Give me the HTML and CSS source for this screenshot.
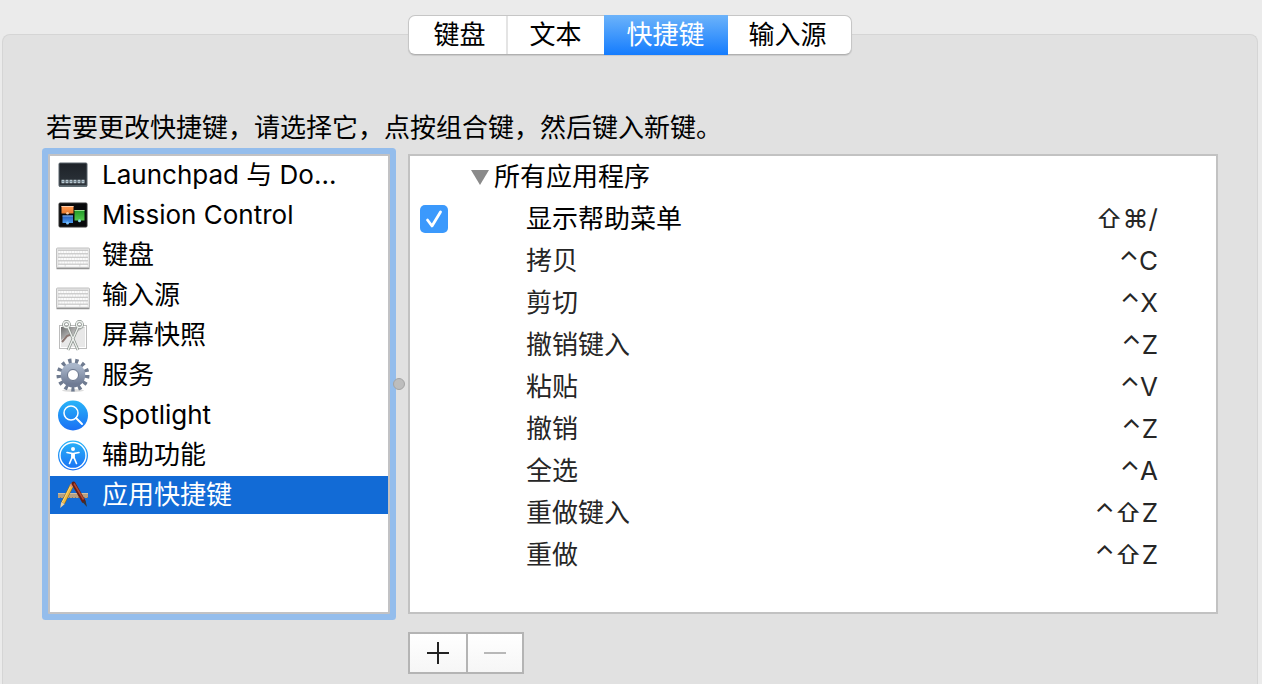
FILE: index.html
```html
<!DOCTYPE html>
<html lang="zh-CN">
<head>
<meta charset="utf-8">
<title>键盘</title>
<link rel="stylesheet" href="styles.css">
</head>
<body>
<svg class="defs" aria-hidden="true">
  <defs>
    <linearGradient id="dark" x1="0" y1="0" x2="0" y2="1"><stop offset="0" stop-color="#1d2228"/><stop offset="1" stop-color="#2d343b"/></linearGradient>
    <linearGradient id="orange" x1="0" y1="0" x2="0" y2="1"><stop offset="0" stop-color="#ff9a55"/><stop offset="1" stop-color="#e87a2c"/></linearGradient>
    <linearGradient id="blue" x1="0" y1="0" x2="0" y2="1"><stop offset="0" stop-color="#2458b8"/><stop offset="1" stop-color="#4c9cf0"/></linearGradient>
    <linearGradient id="green" x1="0" y1="0" x2="0" y2="1"><stop offset="0" stop-color="#1f9a28"/><stop offset="1" stop-color="#55c84c"/></linearGradient>
    <linearGradient id="sky" x1="0" y1="0" x2="0" y2="1"><stop offset="0" stop-color="#28b4f8"/><stop offset="1" stop-color="#1a6ff4"/></linearGradient>
    <linearGradient id="steel" x1="0" y1="0" x2="0" y2="1"><stop offset="0" stop-color="#a9b6ca"/><stop offset="1" stop-color="#6f7b94"/></linearGradient>
    <linearGradient id="photo" x1="0" y1="0" x2="1" y2="1"><stop offset="0" stop-color="#6d6d6d"/><stop offset=".5" stop-color="#c8c8c8"/><stop offset="1" stop-color="#ececec"/></linearGradient>
    <g id="keyboard">
      <rect x="0.5" y="8" width="33" height="20" rx="1" fill="#e6e6e6" stroke="#c0c0c0"/>
      <path d="M0.500 28.500h33" stroke="#949494" stroke-width="1.500"/>
      <g stroke="#fcfcfc" stroke-width="2.600" stroke-dasharray="2 .7">
        <path d="M2.500 12h29"/><path d="M3.500 15.500h28"/><path d="M2.500 19h29"/><path d="M3.500 22.500h28"/><path d="M2.500 25.500h6M10 25.500h13M24.500 25.500h7" stroke-dasharray="none" stroke-width="1.800"/>
      </g>
      <path d="M2 10.300h30M2 13.800h30M2 17.300h30M2 20.800h30M2 24.200h30" stroke="#b8b8b8" stroke-width=".8"/>
    </g>
  </defs>
</svg>
<main class="window">
  <nav class="tabs">
    <button class="tab">键盘</button>
    <button class="tab">文本</button>
    <button class="tab tab-active" aria-current="page">快捷键</button>
    <button class="tab">输入源</button>
  </nav>
  <section class="panel">
    <p class="hint">若要更改快捷键，请选择它，点按组合键，然后键入新键。</p>
    <div class="split">
      <ul class="sidebar">
        <li><button class="item">
          <svg class="icon" viewBox="0 0 34 38"><rect x="3" y="7" width="28" height="23.500" rx="1" fill="url(#dark)" stroke="#59636a"/><path d="M3.500 30h27" stroke="#66737a" stroke-width="1.500"/><path d="M5.500 25.500h23" stroke="#b9c8d0" stroke-width="3.600" stroke-dasharray="3 1"/><path d="M6.500 25.500h21" stroke="#506b7c" stroke-width="1.200" stroke-dasharray="1 3"/></svg>
          Launchpad 与 Do...</button></li>
        <li><button class="item">
          <svg class="icon" viewBox="0 0 34 38"><rect x="3" y="7" width="28" height="24" rx="1" fill="#08090b" stroke="#333"/><rect x="5.500" y="10" width="12" height="7.500" fill="url(#orange)"/><path d="M5.500 10.500h12" stroke="#ffd0ae"/><rect x="6.500" y="19.500" width="10.500" height="7.500" fill="url(#blue)"/><path d="M6.500 20h10.500" stroke="#83b6ef"/><rect x="18.500" y="14" width="10" height="10.500" fill="url(#green)"/><path d="M18.500 14.500h10" stroke="#9ae08e"/><circle cx="11.500" cy="17.300" r="1.300" fill="#f7c69d"/><circle cx="11.500" cy="27" r="1.500" fill="#79bdf7"/><circle cx="23.500" cy="24.800" r="1.500" fill="#8bd8e0"/></svg>
          Mission Control</button></li>
        <li><button class="item"><svg class="icon" viewBox="0 0 34 38"><use href="#keyboard" y="4"/></svg>键盘</button></li>
        <li><button class="item"><svg class="icon" viewBox="0 0 34 38"><use href="#keyboard" y="4"/></svg>输入源</button></li>
        <li><button class="item">
          <svg class="icon" viewBox="0 0 34 38"><rect x="3.500" y="9.500" width="27" height="23" fill="#fff" stroke="#bcbcbc"/><rect x="5" y="11" width="24" height="20" fill="url(#photo)"/><path d="M5 31V24l7-5 6-1 11-7v20z" fill="#e8e8e8"/><path d="M6 26l5-6 5-2" fill="none" stroke="#8a7671" stroke-width="2"/><g fill="none" stroke="#89918c" stroke-width="2.800"><circle cx="10.500" cy="8.500" r="3"/><circle cx="23.500" cy="8.500" r="3"/><path d="M12 11.500L22 34M22 11.500L12 34"/></g><g fill="none" stroke="#eef1ee" stroke-width="1.300"><circle cx="10.500" cy="8.500" r="3"/><circle cx="23.500" cy="8.500" r="3"/><path d="M12 11.500L22 34M22 11.500L12 34"/></g></svg>
          屏幕快照</button></li>
        <li><button class="item">
          <svg class="icon" viewBox="0 0 34 38"><ellipse cx="17" cy="34.500" rx="11" ry="1.500" fill="#ddd"/><circle cx="17" cy="19" r="14" fill="none" stroke="#6f7b90" stroke-width="5" stroke-dasharray="3.200 3.567"/><circle cx="17" cy="19" r="8.800" fill="none" stroke="url(#steel)" stroke-width="7"/><circle cx="17" cy="19" r="5.500" fill="#fff" stroke="#66728a"/></svg>
          服务</button></li>
        <li><button class="item">
          <svg class="icon" viewBox="0 0 34 38"><circle cx="17" cy="19.500" r="15" fill="url(#sky)"/><circle cx="15" cy="17" r="7" fill="none" stroke="#fff" stroke-width="1.500"/><path d="M20 22l6 6" stroke="#fff" stroke-width="2" stroke-linecap="round"/></svg>
          Spotlight</button></li>
        <li><button class="item">
          <svg class="icon" viewBox="0 0 34 38"><circle cx="17" cy="19.500" r="15" fill="url(#sky)"/><circle cx="17" cy="19.500" r="13" fill="none" stroke="#fff" stroke-width="1.400"/><circle cx="17" cy="13" r="2" fill="#fff"/><path d="M11 16.500l5 1v4L13.500 27.500M23 16.500l-5 1v4L20.500 27.500" fill="none" stroke="#fff" stroke-width="1.600" stroke-linecap="round"/><path d="M15.300 17h3.400v5.500h-3.400z" fill="#fff"/></svg>
          辅助功能</button></li>
        <li><button class="item item-selected" aria-current="true">
          <svg class="icon" viewBox="0 0 34 38"><path d="M2 17h30v5H2z" fill="#b5a082"/><path d="M2 17.500h30" stroke="#d2bea0"/><path d="M4 21.500h28" stroke="#8d7a60" stroke-dasharray="1 2"/><path d="M16 9L7 27" stroke="#8c6b22" stroke-width="4"/><path d="M16 9L7 27" stroke="#f0ba40" stroke-width="2.800"/><path d="M15.300 8.500L6.300 26" stroke="#ffe08b" stroke-width=".8"/><path d="M5.200 26l3.500 2-4.500 4z" fill="#ecd2a4"/><path d="M15.500 7l3 1.500-2 3-3-1.500z" fill="#d49278"/><path d="M17.500 7.500L27.500 25" stroke="#681d12" stroke-width="4" stroke-linecap="round"/><path d="M18 7.500l9.500 16" stroke="#b64930" stroke-width="1.500"/><path d="M26.500 26l3-1.500 1.500 6.500z" fill="#353437"/></svg>
          应用快捷键</button></li>
      </ul>
      <div class="divider"><span class="grip"></span></div>
      <div class="shortcuts">
        <table class="table">
          <tbody>
            <tr><td class="check"></td><th class="group" scope="rowgroup" colspan="2"><button class="disclose" aria-expanded="true"><svg class="triangle" viewBox="0 0 18 15" aria-hidden="true"><path d="M0 0h18L9 15z"/></svg>所有应用程序</button></th></tr>
            <tr class="enabled"><td class="check"><input class="box" type="checkbox" id="help" checked></td><td class="name"><label for="help">显示帮助菜单</label></td><td class="keys">⇧⌘/</td></tr>
            <tr><td class="check"></td><td class="name">拷贝</td><td class="keys">⌃C</td></tr>
            <tr><td class="check"></td><td class="name">剪切</td><td class="keys">⌃X</td></tr>
            <tr><td class="check"></td><td class="name">撤销键入</td><td class="keys">⌃Z</td></tr>
            <tr><td class="check"></td><td class="name">粘贴</td><td class="keys">⌃V</td></tr>
            <tr><td class="check"></td><td class="name">撤销</td><td class="keys">⌃Z</td></tr>
            <tr><td class="check"></td><td class="name">全选</td><td class="keys">⌃A</td></tr>
            <tr><td class="check"></td><td class="name">重做键入</td><td class="keys">⌃⇧Z</td></tr>
            <tr><td class="check"></td><td class="name">重做</td><td class="keys">⌃⇧Z</td></tr>
          </tbody>
        </table>
      </div>
    </div>
    <div class="actions">
      <button class="action" aria-label="添加"><svg class="sign" viewBox="0 0 22 22"><path d="M0 11h22M11 0v22"/></svg></button>
      <button class="action" aria-label="移除" disabled><svg class="sign" viewBox="0 0 22 22"><path d="M0 11h22"/></svg></button>
    </div>
  </section>
</main>
</body>
</html>
```
FILE: styles.css
```css
* { box-sizing: border-box; }

body {
  margin: 0;
  background: #ebebeb;
  color: #000;
  font: 26px/38px Inter, "Noto Sans CJK SC", sans-serif;
}

button {
  margin: 0;
  padding: 0;
  border: 0;
  background: none;
  color: inherit;
  font: inherit;
}

.defs { position: absolute; width: 0; height: 0; }

.window {
  display: flex;
  flex-direction: column;
  min-height: 100vh;
  padding: 15px 4px 0 2px;
}

.tabs {
  z-index: 1;
  display: flex;
  align-self: center;
  margin-bottom: -21px;
  border: 1px solid #c6c6c6;
  border-bottom-color: #b0b0b0;
  border-radius: 7px;
  background: #fff;
  box-shadow: 0 1px 1px #0000001c;
}

.tab { padding: 0 22px 0 21px; line-height: 38px; }
.tab:first-child { padding: 0 21px 0 24px; border-right: 2px solid #e4e4e4; }
.tab:last-child { padding-right: 24px; }
.tab-active {
  margin: -1px 0;
  padding: 1px 23px;
  background: linear-gradient(#6cb3fa, #147cfe);
  color: #fff;
}

.panel {
  flex: 1;
  padding: 74px 39px 10px 45px;
  border: 1px solid #d5d5d5;
  border-bottom: 0;
  border-radius: 8px 8px 0 0;
  background: #e1e1e1;
}

.hint { margin: 0 0 7px -2px; }

.split { display: flex; min-height: 460px; }

.sidebar {
  flex: 0 0 342px;
  display: flex;
  flex-direction: column;
  gap: 2px;
  margin: 0;
  padding: 0;
  border: 2px solid #c2c2c4;
  background: #fff;
  box-shadow: 0 0 0 6px #94bdec;
  border-radius: 1px;
  list-style: none;
}

.item {
  display: flex;
  align-items: center;
  gap: 12px;
  width: 100%;
  height: 38px;
  padding-left: 6px;
  text-align: left;
  white-space: nowrap;
}
.item-selected { background: #126bd6; color: #fff; }
.icon { flex: none; width: 34px; height: 38px; }

.divider {
  z-index: 1;
  flex: 0 0 18px;
  display: grid;
  place-items: center;
}
.grip {
  width: 12px;
  height: 12px;
  border: 1px solid #a4a4a4;
  border-radius: 50%;
  background: #bdbdbd;
}

.shortcuts { flex: 1; border: 2px solid #c2c2c2; background: #fff; }
.table { width: 100%; border-collapse: collapse; color: #262626; }
.table tr { height: 42px; }
.table td, .table th { padding: 0; font-weight: 400; text-align: left; }
.table .check { width: 61px; padding-left: 10px; }
.table .name { padding-left: 55px; }
.table .keys { padding-right: 58px; text-align: right; font-family: Inter, "DejaVu Sans", sans-serif; }
.enabled .name, .group { color: #000; }

.disclose { display: flex; align-items: center; gap: 5px; }
.triangle { width: 18px; height: 15px; fill: #8a8a8a; }

.box {
  display: block;
  width: 28px;
  height: 28px;
  margin: 0;
  appearance: none;
  border-radius: 5px;
}
.box:checked {
  background: #3b99fc url("data:image/svg+xml,%3Csvg xmlns='http://www.w3.org/2000/svg' viewBox='0 0 28 28'%3E%3Cpath d='M7.500 15l4.500 6 8.500-14' fill='none' stroke='white' stroke-width='2.800' stroke-linecap='round' stroke-linejoin='round'/%3E%3C/svg%3E");
}

.actions { display: flex; margin: 18px 0 0 360px; }
.action {
  display: grid;
  place-items: center;
  width: 60px;
  height: 42px;
  border: 2px solid #b4b4b4;
  background: linear-gradient(#fff, #f6f6f6);
}
.action + .action { width: 56px; border-left: 0; }
.sign { width: 22px; height: 22px; fill: none; stroke: #222; stroke-width: 2; }
.action:disabled .sign { stroke: #b8b8b8; }
```
